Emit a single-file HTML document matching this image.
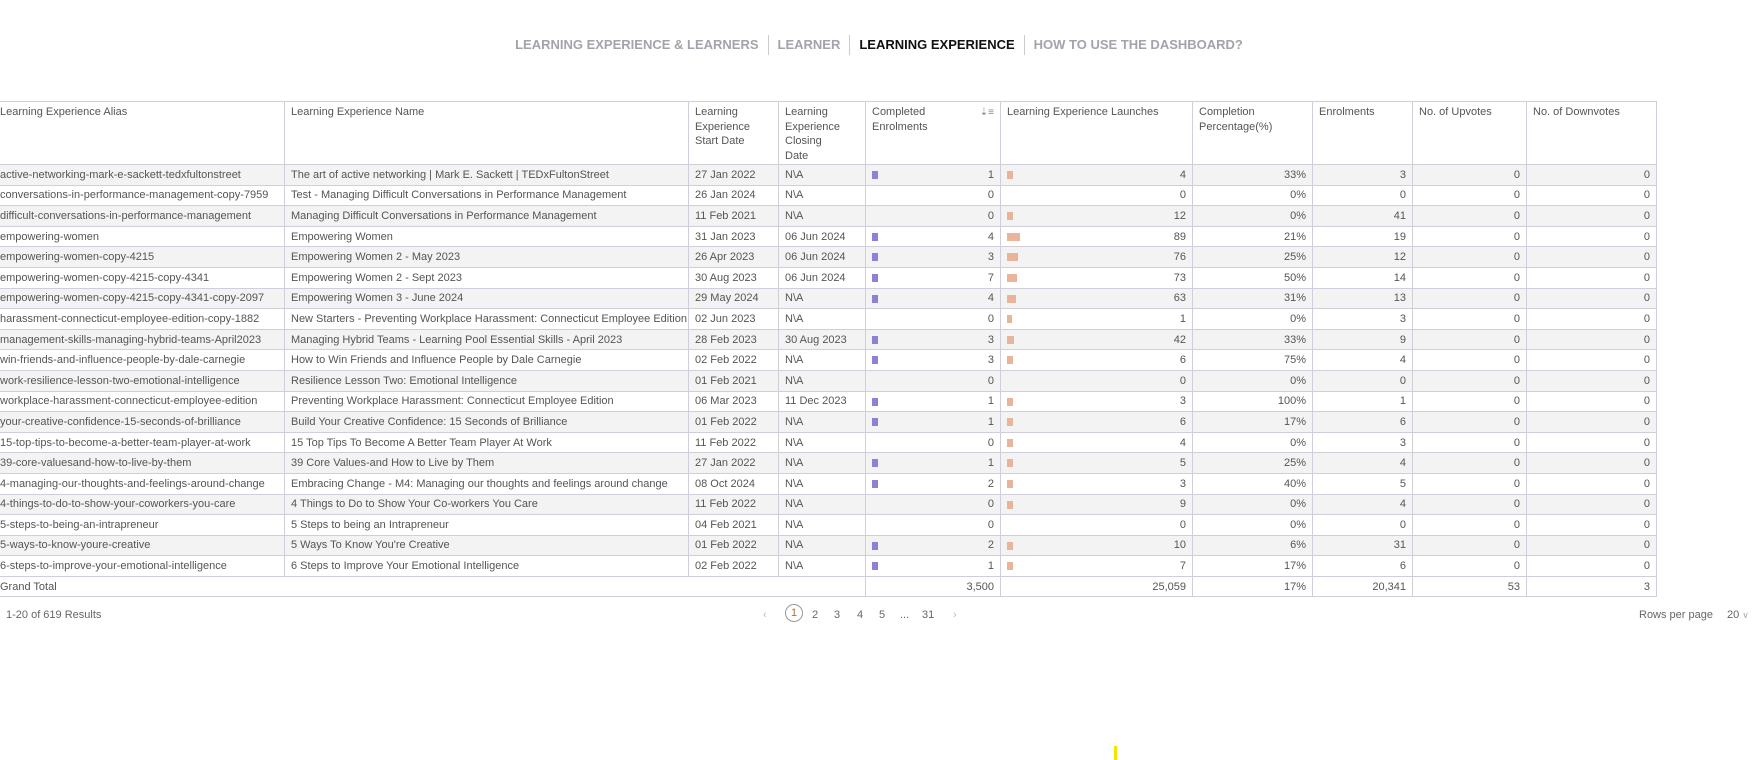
<!DOCTYPE html>
<html><head><meta charset="utf-8"><style>
*{box-sizing:border-box;margin:0;padding:0}
body{width:1758px;height:760px;background:#fff;font-family:"Liberation Sans",Arial,sans-serif;color:#555;position:relative;overflow:hidden}
.nav{position:absolute;top:35px;left:0;width:1758px;text-align:center;font-weight:bold;font-size:13px;color:#a3a3ab;white-space:nowrap}
.nav span{display:inline-block;padding:0 9px;border-left:1px solid #ccc;line-height:20px}
.nav span:first-child{border-left:none}
.nav .act{color:#111}
table{position:absolute;left:-7px;top:101px;width:1663px;border-collapse:collapse;table-layout:fixed;font-size:11px}
td,th{border:1px solid #cfcfdb;padding:0 6px;white-space:nowrap;overflow:hidden;height:20.6px;line-height:14px}
th{font-weight:normal;text-align:left;vertical-align:top;padding-top:3px;line-height:14.5px;white-space:normal;height:63px;color:#555}
tr:nth-child(even) td{background:#f3f3f3}
td.n{text-align:right}
.b{position:relative}
.b i{position:absolute;left:6px;top:6px;height:8px;display:block}
.p{background:#8c80d8;width:6px}
.o{background:#e8b59a}
.sort{position:absolute;right:6px;top:4px;font-size:10px;color:#888}
.pg{position:absolute;top:609px;font-size:11px;color:#666}
.yl{position:absolute;left:1114px;top:746px;width:3px;height:14px;background:#f2e600}
</style></head><body>
<div class="nav"><span>LEARNING EXPERIENCE &amp; LEARNERS</span><span>LEARNER</span><span class="act">LEARNING EXPERIENCE</span><span>HOW TO USE THE DASHBOARD?</span></div>
<table>
<colgroup><col style="width:291px"><col style="width:404px"><col style="width:90px"><col style="width:87px"><col style="width:135px"><col style="width:192px"><col style="width:120px"><col style="width:100px"><col style="width:114px"><col style="width:130px"></colgroup>
<tr><th>Learning Experience Alias</th><th>Learning Experience Name</th><th>Learning Experience Start Date</th><th style="padding-right:20px">Learning Experience Closing Date</th><th style="position:relative;padding-right:30px">Completed Enrolments<span class="sort">⇣≡</span></th><th>Learning Experience Launches</th><th>Completion Percentage(%)</th><th>Enrolments</th><th>No. of Upvotes</th><th>No. of Downvotes</th></tr>
<tr><td>active-networking-mark-e-sackett-tedxfultonstreet</td><td>The art of active networking | Mark E. Sackett | TEDxFultonStreet</td><td>27 Jan 2022</td><td>N\A</td><td class="n b"><i class="p"></i>1</td><td class="n b"><i class="o" style="width:6px"></i>4</td><td class="n">33%</td><td class="n">3</td><td class="n">0</td><td class="n">0</td></tr>
<tr><td>conversations-in-performance-management-copy-7959</td><td>Test - Managing Difficult Conversations in Performance Management</td><td>26 Jan 2024</td><td>N\A</td><td class="n">0</td><td class="n">0</td><td class="n">0%</td><td class="n">0</td><td class="n">0</td><td class="n">0</td></tr>
<tr><td>difficult-conversations-in-performance-management</td><td>Managing Difficult Conversations in Performance Management</td><td>11 Feb 2021</td><td>N\A</td><td class="n">0</td><td class="n b"><i class="o" style="width:6px"></i>12</td><td class="n">0%</td><td class="n">41</td><td class="n">0</td><td class="n">0</td></tr>
<tr><td>empowering-women</td><td>Empowering Women</td><td>31 Jan 2023</td><td>06 Jun 2024</td><td class="n b"><i class="p"></i>4</td><td class="n b"><i class="o" style="width:13px"></i>89</td><td class="n">21%</td><td class="n">19</td><td class="n">0</td><td class="n">0</td></tr>
<tr><td>empowering-women-copy-4215</td><td>Empowering Women 2 - May 2023</td><td>26 Apr 2023</td><td>06 Jun 2024</td><td class="n b"><i class="p"></i>3</td><td class="n b"><i class="o" style="width:11px"></i>76</td><td class="n">25%</td><td class="n">12</td><td class="n">0</td><td class="n">0</td></tr>
<tr><td>empowering-women-copy-4215-copy-4341</td><td>Empowering Women 2 - Sept 2023</td><td>30 Aug 2023</td><td>06 Jun 2024</td><td class="n b"><i class="p"></i>7</td><td class="n b"><i class="o" style="width:10px"></i>73</td><td class="n">50%</td><td class="n">14</td><td class="n">0</td><td class="n">0</td></tr>
<tr><td>empowering-women-copy-4215-copy-4341-copy-2097</td><td>Empowering Women 3 - June 2024</td><td>29 May 2024</td><td>N\A</td><td class="n b"><i class="p"></i>4</td><td class="n b"><i class="o" style="width:9px"></i>63</td><td class="n">31%</td><td class="n">13</td><td class="n">0</td><td class="n">0</td></tr>
<tr><td>harassment-connecticut-employee-edition-copy-1882</td><td>New Starters - Preventing Workplace Harassment: Connecticut Employee Edition</td><td>02 Jun 2023</td><td>N\A</td><td class="n">0</td><td class="n b"><i class="o" style="width:5px"></i>1</td><td class="n">0%</td><td class="n">3</td><td class="n">0</td><td class="n">0</td></tr>
<tr><td>management-skills-managing-hybrid-teams-April2023</td><td>Managing Hybrid Teams - Learning Pool Essential Skills - April 2023</td><td>28 Feb 2023</td><td>30 Aug 2023</td><td class="n b"><i class="p"></i>3</td><td class="n b"><i class="o" style="width:7px"></i>42</td><td class="n">33%</td><td class="n">9</td><td class="n">0</td><td class="n">0</td></tr>
<tr><td>win-friends-and-influence-people-by-dale-carnegie</td><td>How to Win Friends and Influence People by Dale Carnegie</td><td>02 Feb 2022</td><td>N\A</td><td class="n b"><i class="p"></i>3</td><td class="n b"><i class="o" style="width:6px"></i>6</td><td class="n">75%</td><td class="n">4</td><td class="n">0</td><td class="n">0</td></tr>
<tr><td>work-resilience-lesson-two-emotional-intelligence</td><td>Resilience Lesson Two: Emotional Intelligence</td><td>01 Feb 2021</td><td>N\A</td><td class="n">0</td><td class="n">0</td><td class="n">0%</td><td class="n">0</td><td class="n">0</td><td class="n">0</td></tr>
<tr><td>workplace-harassment-connecticut-employee-edition</td><td>Preventing Workplace Harassment: Connecticut Employee Edition</td><td>06 Mar 2023</td><td>11 Dec 2023</td><td class="n b"><i class="p"></i>1</td><td class="n b"><i class="o" style="width:6px"></i>3</td><td class="n">100%</td><td class="n">1</td><td class="n">0</td><td class="n">0</td></tr>
<tr><td>your-creative-confidence-15-seconds-of-brilliance</td><td>Build Your Creative Confidence: 15 Seconds of Brilliance</td><td>01 Feb 2022</td><td>N\A</td><td class="n b"><i class="p"></i>1</td><td class="n b"><i class="o" style="width:6px"></i>6</td><td class="n">17%</td><td class="n">6</td><td class="n">0</td><td class="n">0</td></tr>
<tr><td>15-top-tips-to-become-a-better-team-player-at-work</td><td>15 Top Tips To Become A Better Team Player At Work</td><td>11 Feb 2022</td><td>N\A</td><td class="n">0</td><td class="n b"><i class="o" style="width:6px"></i>4</td><td class="n">0%</td><td class="n">3</td><td class="n">0</td><td class="n">0</td></tr>
<tr><td>39-core-valuesand-how-to-live-by-them</td><td>39 Core Values-and How to Live by Them</td><td>27 Jan 2022</td><td>N\A</td><td class="n b"><i class="p"></i>1</td><td class="n b"><i class="o" style="width:6px"></i>5</td><td class="n">25%</td><td class="n">4</td><td class="n">0</td><td class="n">0</td></tr>
<tr><td>4-managing-our-thoughts-and-feelings-around-change</td><td>Embracing Change - M4: Managing our thoughts and feelings around change</td><td>08 Oct 2024</td><td>N\A</td><td class="n b"><i class="p"></i>2</td><td class="n b"><i class="o" style="width:6px"></i>3</td><td class="n">40%</td><td class="n">5</td><td class="n">0</td><td class="n">0</td></tr>
<tr><td>4-things-to-do-to-show-your-coworkers-you-care</td><td>4 Things to Do to Show Your Co-workers You Care</td><td>11 Feb 2022</td><td>N\A</td><td class="n">0</td><td class="n b"><i class="o" style="width:6px"></i>9</td><td class="n">0%</td><td class="n">4</td><td class="n">0</td><td class="n">0</td></tr>
<tr><td>5-steps-to-being-an-intrapreneur</td><td>5 Steps to being an Intrapreneur</td><td>04 Feb 2021</td><td>N\A</td><td class="n">0</td><td class="n">0</td><td class="n">0%</td><td class="n">0</td><td class="n">0</td><td class="n">0</td></tr>
<tr><td>5-ways-to-know-youre-creative</td><td>5 Ways To Know You're Creative</td><td>01 Feb 2022</td><td>N\A</td><td class="n b"><i class="p"></i>2</td><td class="n b"><i class="o" style="width:6px"></i>10</td><td class="n">6%</td><td class="n">31</td><td class="n">0</td><td class="n">0</td></tr>
<tr><td>6-steps-to-improve-your-emotional-intelligence</td><td>6 Steps to Improve Your Emotional Intelligence</td><td>02 Feb 2022</td><td>N\A</td><td class="n b"><i class="p"></i>1</td><td class="n b"><i class="o" style="width:6px"></i>7</td><td class="n">17%</td><td class="n">6</td><td class="n">0</td><td class="n">0</td></tr>
<tr><td colspan="4" style="background:#fff">Grand Total</td><td class="n" style="background:#fff">3,500</td><td class="n" style="background:#fff">25,059</td><td class="n" style="background:#fff">17%</td><td class="n" style="background:#fff">20,341</td><td class="n" style="background:#fff">53</td><td class="n" style="background:#fff">3</td></tr>
</table>
<div class="pg" style="left:6px">1-20 of 619 Results</div>
<div class="pg" style="left:763px;color:#bbb">‹</div>
<div class="pg" style="left:785px;top:604px;width:18px;height:18px;border:1px solid #999;border-radius:50%;text-align:center;line-height:16px;color:#b07040">1</div>
<div class="pg" style="left:812px">2</div>
<div class="pg" style="left:834px">3</div>
<div class="pg" style="left:857px">4</div>
<div class="pg" style="left:879px">5</div>
<div class="pg" style="left:900px">...</div>
<div class="pg" style="left:922px">31</div>
<div class="pg" style="left:953px;color:#bbb">›</div>
<div class="pg" style="left:1639px">Rows per page</div>
<div class="pg" style="left:1727px">20 <span style="color:#aaa;font-size:9px">∨</span></div>
<div class="yl"></div>
</body></html>
